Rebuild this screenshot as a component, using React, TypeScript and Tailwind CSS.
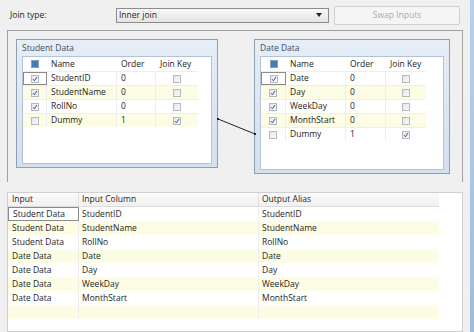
import React from "react";

type Col = { name: string; order: number; checked: boolean; key: boolean };

const studentCols: Col[] = [
  { name: "StudentID", order: 0, checked: true, key: false },
  { name: "StudentName", order: 0, checked: true, key: false },
  { name: "RollNo", order: 0, checked: true, key: false },
  { name: "Dummy", order: 1, checked: false, key: true },
];

const dateCols: Col[] = [
  { name: "Date", order: 0, checked: true, key: false },
  { name: "Day", order: 0, checked: true, key: false },
  { name: "WeekDay", order: 0, checked: true, key: false },
  { name: "MonthStart", order: 0, checked: true, key: false },
  { name: "Dummy", order: 1, checked: false, key: true },
];

const outputRows = [
  ["Student Data", "StudentID", "StudentID"],
  ["Student Data", "StudentName", "StudentName"],
  ["Student Data", "RollNo", "RollNo"],
  ["Date Data", "Date", "Date"],
  ["Date Data", "Day", "Day"],
  ["Date Data", "WeekDay", "WeekDay"],
  ["Date Data", "MonthStart", "MonthStart"],
  ["", "", ""],
];

const Check = ({ on }: { on: boolean }) => (
  <div className="w-[8px] h-[8px] border border-[#b4b9c0] bg-gradient-to-br from-[#e4e6ea] to-[#fafafa] flex items-center justify-center">
    {on && (
      <svg width="6" height="6" viewBox="0 0 6 6">
        <path d="M1 3.2 L2.4 4.8 L5 1" stroke="#3a4a8a" strokeWidth="1" fill="none" />
      </svg>
    )}
  </div>
);

const HeadCheck = () => (
  <div className="w-[8px] h-[8px] border border-[#8aa0b8] bg-white flex items-center justify-center">
    <div className="w-[6px] h-[6px] bg-[#3d7fb8]" />
  </div>
);

type BoxProps = {
  title: string;
  cols: Col[];
  widths: [number, number, number, number];
  boxW: string;
  boxH: string;
};

const SourceBox = ({ title, cols, widths, boxW, boxH }: BoxProps) => {
  const [cw, nw, ow, kw] = widths;
  return (
    <div className={`${boxW} ${boxH} border border-[#8d9fb5] bg-gradient-to-b from-[#e6eef7] to-[#d3e0ee] flex flex-col px-[5px] pb-[3px]`}>
      <div className="h-[16px] flex items-center text-[#3c4d63]">{title}</div>
      <div className="flex-1 bg-white border border-[#b3c3d4]">
        <div className="flex h-[14px] items-center">
          <div style={{ width: cw }} className="flex justify-center"><HeadCheck /></div>
          <div style={{ width: nw }} className="pl-[4px]">Name</div>
          <div style={{ width: ow }} className="pl-[4px]">Order</div>
          <div style={{ width: kw }} className="pl-[4px]">Join Key</div>
        </div>
        {cols.map((c, i) => (
          <div
            key={c.name + i}
            className={`flex h-[14px] items-center border-t border-[#eeeeee] ${i % 2 === 1 ? "bg-[#fdfce4]" : "bg-white"}`}
            style={{ width: cw + nw + ow + kw }}
          >
            <div
              style={{ width: cw }}
              className={`h-full flex justify-center items-center ${i === 0 ? "border border-[#8a8a8a]" : "border-r border-[#eeeeee]"}`}
            >
              <Check on={c.checked} />
            </div>
            <div style={{ width: nw }} className="pl-[4px] h-full flex items-center border-r border-[#eeeeee]">{c.name}</div>
            <div style={{ width: ow }} className="pl-[4px] h-full flex items-center border-r border-[#eeeeee]">{c.order}</div>
            <div style={{ width: kw }} className="h-full flex justify-center items-center">
              <Check on={c.key} />
            </div>
          </div>
        ))}
      </div>
    </div>
  );
};

export default function App() {
  return (
    <div className="w-[474px] h-[332px] bg-[#f0f0f0] flex overflow-hidden text-[8.5px] text-[#1e1e1e] font-['Open_Sans','Noto_Sans',sans-serif]">
      <div className="w-[470px] flex flex-col">
        {/* top bar */}
        <div className="h-[30px] flex items-center">
          <div className="w-[116px] pl-[10px]">Join type:</div>
          <div className="w-[213px] h-[15px] border border-[#8c8c8c] bg-gradient-to-b from-[#f8f8f8] to-[#e4e4e4] flex items-center justify-between px-[2px]">
            <span>Inner join</span>
            <svg width="6" height="4" viewBox="0 0 6 4" className="mr-[4px]">
              <path d="M0 0 L6 0 L3 4 Z" fill="#222" />
            </svg>
          </div>
          <div className="ml-[5px] w-[126px] h-[19px] border border-[#cfcfcf] rounded-[2px] bg-[#f5f5f5] flex items-center justify-center text-[#ababab]">
            Swap Inputs
          </div>
        </div>

        {/* designer */}
        <div className="relative ml-[7px] w-[456px] h-[152px] border-t border-l border-r border-[#a0a0a0] flex items-start pt-[8px] pl-[8px]">
          <SourceBox
            title="Student Data"
            cols={studentCols}
            widths={[24, 70, 39, 42]}
            boxW="w-[202px]"
            boxH="h-[129px]"
          />
          <div className="w-[36px]" />
          <SourceBox
            title="Date Data"
            cols={dateCols}
            widths={[25, 60, 40, 40]}
            boxW="w-[196px]"
            boxH="h-[135px]"
          />
          <svg className="absolute left-0 top-0" width="456" height="152">
            <line x1="210" y1="88" x2="247" y2="103" stroke="#222" strokeWidth="1" />
            <rect x="209" y="87" width="2" height="2" fill="#222" />
            <rect x="246" y="102" width="2" height="2" fill="#222" />
          </svg>
        </div>

        {/* output grid */}
        <div className="ml-[7px] mt-[10px] w-[456px] flex-1 bg-white border border-[#d0d0d0]">
          <div className="flex h-[14px] items-center bg-gradient-to-b from-[#fbfbfb] to-[#f0f0f0] border-b border-[#dcdcdc] w-[431px]">
            <div className="w-[71px] pl-[4px] border-r border-[#e2e2e2] h-full flex items-center">Input</div>
            <div className="w-[180px] pl-[3px] border-r border-[#e2e2e2] h-full flex items-center">Input Column</div>
            <div className="w-[180px] pl-[3px] h-full flex items-center">Output Alias</div>
          </div>
          {outputRows.map((r, i) => (
            <div
              key={i}
              className={`flex h-[14px] items-center w-[431px] ${i % 2 === 1 ? "bg-[#fdfce4]" : "bg-white"}`}
            >
              <div className={`w-[71px] pl-[4px] h-full flex items-center ${i === 0 ? "border border-[#8a8a8a]" : "border-r border-[#eeeeee]"}`}>{r[0]}</div>
              <div className="w-[180px] pl-[3px] h-full flex items-center border-r border-[#eeeeee]">{r[1]}</div>
              <div className="w-[180px] pl-[3px] h-full flex items-center">{r[2]}</div>
            </div>
          ))}
        </div>
      </div>
      <div className="w-[4px] bg-gradient-to-b from-[#b9d1ea] to-[#9fbcdc]" />
    </div>
  );
}
